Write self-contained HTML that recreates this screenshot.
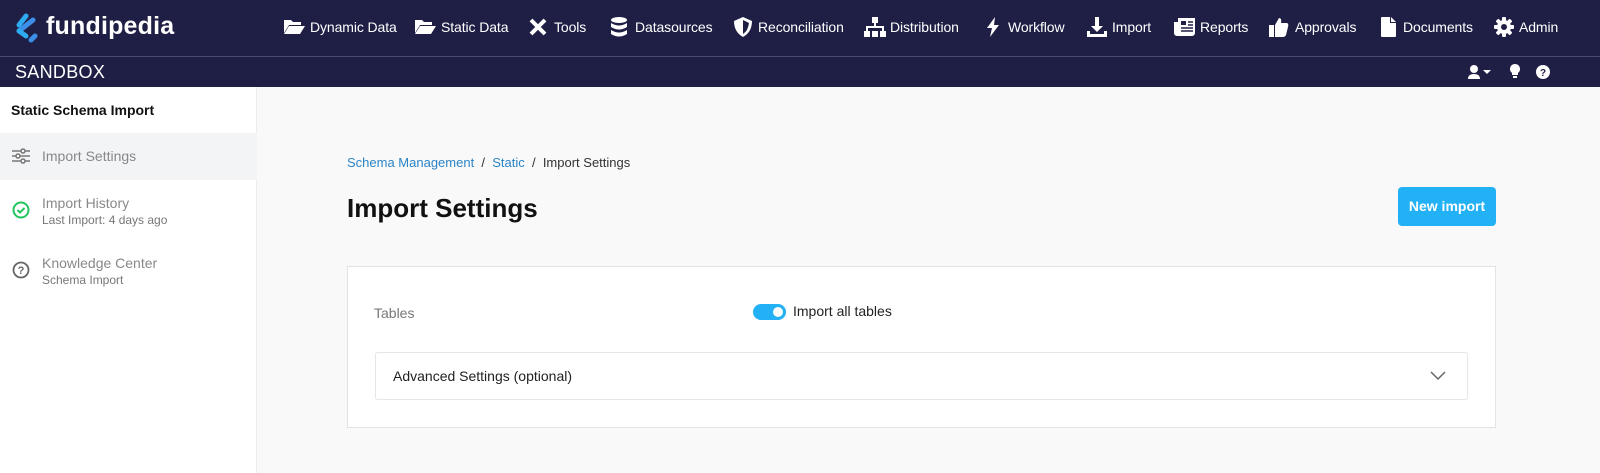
<!DOCTYPE html>
<html><head><style>
*{margin:0;padding:0;box-sizing:border-box}
body{width:1600px;height:473px;overflow:hidden;background:#f9f9f9;font-family:"Liberation Sans",sans-serif;position:relative}
.nav{position:absolute;left:0;top:0;width:1600px;height:56px;background:#1f1f45}
.sb{position:absolute;left:0;top:56px;width:1600px;height:31px;background:#1f1f45;border-top:1px solid #4a4b72}
.ni{position:absolute;top:19px;color:#fff;font-size:14px;white-space:nowrap;letter-spacing:-0.1px}
.ic{position:absolute;top:17px}
.side{position:absolute;left:0;top:87px;width:257px;height:386px;background:#fff;border-right:1px solid #ececec}
.t{position:absolute;white-space:nowrap}
</style></head><body>
<div class="nav">
<svg style="position:absolute;left:14px;top:11px" width="26" height="34" viewBox="0 0 26 34"><g stroke="#2eaaf0" stroke-width="5" stroke-linecap="round"><path d="M5 14L12 5"/><path d="M5 20L19 9" stroke="#3d8ee8"/><path d="M5 20L12 25"/><path d="M17 29L21 25" stroke="#3d8ee8"/></g></svg>
<div class="t" style="left:46px;top:12px;color:#fff;font-size:25px;font-weight:bold;letter-spacing:0.2px">fundipedia</div>

<svg class="ic" style="left:283px" width="22" height="18" viewBox="0 0 22 18"><path d="M1 3h7l2 2h8v3H6L1 16z" fill="#fff"/><path d="M6 9h16l-5 8H1z" fill="#fff"/></svg>
<div class="ni" style="left:310px">Dynamic Data</div>
<svg class="ic" style="left:414px" width="22" height="18" viewBox="0 0 22 18"><path d="M1 3h7l2 2h8v3H6L1 16z" fill="#fff"/><path d="M6 9h16l-5 8H1z" fill="#fff"/></svg>
<div class="ni" style="left:441px">Static Data</div>
<svg class="ic" style="left:528px" width="20" height="20" viewBox="0 0 20 20"><path d="M3 3l14 14M17 3L3 17" stroke="#fff" stroke-width="4"/></svg>
<div class="ni" style="left:554px">Tools</div>
<svg class="ic" style="left:611px" width="16" height="20" viewBox="0 0 16 20"><ellipse cx="8" cy="3" rx="8" ry="3" fill="#fff"/><path d="M0 6q8 5 16 0v4q-8 5-16 0zM0 13q8 5 16 0v4q-8 5-16 0z" fill="#fff"/></svg>
<div class="ni" style="left:635px">Datasources</div>
<svg class="ic" style="left:734px" width="18" height="20" viewBox="0 0 18 20"><path d="M9 0L0 4q0 11 9 16q9-5 9-16z" fill="#fff"/><path d="M9 3v14q5-3 6-11z" fill="#1f1f45"/></svg>
<div class="ni" style="left:758px">Reconciliation</div>
<svg class="ic" style="left:864px" width="22" height="20" viewBox="0 0 22 20"><rect x="8" y="0" width="6" height="6" fill="#fff"/><path d="M11 6v4M3 14v-4h16v4" stroke="#fff" stroke-width="2" fill="none"/><rect x="0" y="14" width="6" height="6" fill="#fff"/><rect x="8" y="14" width="6" height="6" fill="#fff"/><rect x="16" y="14" width="6" height="6" fill="#fff"/></svg>
<div class="ni" style="left:890px">Distribution</div>
<svg class="ic" style="left:986px" width="14" height="20" viewBox="0 0 14 20"><path d="M9 0L1 11h5l-2 9 9-12H8z" fill="#fff"/></svg>
<div class="ni" style="left:1008px">Workflow</div>
<svg class="ic" style="left:1087px" width="20" height="20" viewBox="0 0 20 20"><path d="M8 0h4v9h4l-6 6-6-6h4z" fill="#fff"/><path d="M0 14h3v3h14v-3h3v6H0z" fill="#fff"/></svg>
<div class="ni" style="left:1112px">Import</div>
<svg class="ic" style="left:1174px" width="22" height="20" viewBox="0 0 22 20"><path d="M4 1h17v15a3 3 0 0 1-3 3H3a3 3 0 0 1-3-3V5h4z" fill="#fff"/><rect x="7" y="4" width="5" height="4" fill="#1f1f45"/><path d="M14 5h5M14 8h5M7 11h12M7 14h12" stroke="#1f1f45" stroke-width="1.5"/></svg>
<div class="ni" style="left:1200px">Reports</div>
<svg class="ic" style="left:1269px" width="20" height="20" viewBox="0 0 20 20"><rect x="0" y="8" width="5" height="12" fill="#fff"/><path d="M6 8l4-7q3 0 2 5h6q2 1 1 4l-2 8q-1 2-3 2H6z" fill="#fff"/></svg>
<div class="ni" style="left:1295px">Approvals</div>
<svg class="ic" style="left:1381px" width="15" height="20" viewBox="0 0 15 20"><path d="M0 1q0-1 1-1h8v6h6v13q0 1-1 1H1q-1 0-1-1zM10 0l5 5h-5z" fill="#fff"/></svg>
<div class="ni" style="left:1403px">Documents</div>
<svg class="ic" style="left:1494px" width="20" height="20" viewBox="0 0 20 20"><g fill="#fff"><circle cx="10" cy="10" r="7"/><rect x="8" y="0" width="4" height="20" rx="1"/><rect x="8" y="0" width="4" height="20" rx="1" transform="rotate(45 10 10)"/><rect x="8" y="0" width="4" height="20" rx="1" transform="rotate(90 10 10)"/><rect x="8" y="0" width="4" height="20" rx="1" transform="rotate(135 10 10)"/></g><circle cx="10" cy="10" r="3" fill="#1f1f45"/></svg>
<div class="ni" style="left:1519px">Admin</div>
</div>
<div class="sb">
<div class="t" style="left:15px;top:5px;color:#fff;font-size:18px;letter-spacing:0.3px">SANDBOX</div>
<svg style="position:absolute;left:1468px;top:8px" width="26" height="14" viewBox="0 0 26 14"><circle cx="6" cy="4" r="4" fill="#fff"/><path d="M0 14q0-5 6-5t6 5z" fill="#fff"/><path d="M15 5h8l-4 4z" fill="#fff"/></svg>
<svg style="position:absolute;left:1510px;top:7px" width="10" height="15" viewBox="0 0 10 15"><path d="M5 0a5 5 0 0 1 3 9v2H2V9A5 5 0 0 1 5 0z" fill="#fff"/><rect x="3" y="12" width="4" height="2" fill="#fff"/></svg>
<svg style="position:absolute;left:1536px;top:8px" width="14" height="14" viewBox="0 0 14 14"><circle cx="7" cy="7" r="7" fill="#fff"/><text x="7" y="11" font-size="10" font-weight="bold" text-anchor="middle" fill="#1f1f45" font-family="Liberation Sans">?</text></svg>
</div>
<div class="side">
<div class="t" style="left:11px;top:15px;font-size:14px;font-weight:bold;color:#111">Static Schema Import</div>
<div style="position:absolute;left:0;top:46px;width:257px;height:47px;background:#f3f4f6"></div>
<svg style="position:absolute;left:12px;top:61px" width="18" height="16" viewBox="0 0 18 16" fill="none" stroke="#777" stroke-width="1.5"><path d="M0 3h18M0 8h18M0 13h18"/><circle cx="11" cy="3" r="2" fill="#f3f4f6"/><circle cx="6" cy="8" r="2" fill="#f3f4f6"/><circle cx="11" cy="13" r="2" fill="#f3f4f6"/></svg>
<div class="t" style="left:42px;top:61px;font-size:14px;color:#888">Import Settings</div>
<svg style="position:absolute;left:12px;top:114px" width="18" height="18" viewBox="0 0 18 18" fill="none" stroke="#22c55e" stroke-width="2"><circle cx="9" cy="9" r="7.5"/><path d="M5.5 9l2.5 2.5 4.5-4.5"/></svg>
<div class="t" style="left:42px;top:108px;font-size:14px;color:#888">Import History</div>
<div class="t" style="left:42px;top:126px;font-size:12px;color:#777">Last Import: 4 days ago</div>
<svg style="position:absolute;left:12px;top:174px" width="18" height="18" viewBox="0 0 18 18"><circle cx="9" cy="9" r="7.5" fill="none" stroke="#666" stroke-width="1.8"/><text x="9" y="13" font-size="11" font-weight="bold" text-anchor="middle" fill="#666" font-family="Liberation Sans">?</text></svg>
<div class="t" style="left:42px;top:168px;font-size:14px;color:#888">Knowledge Center</div>
<div class="t" style="left:42px;top:186px;font-size:12px;color:#777">Schema Import</div>
</div>
<div class="t" style="left:347px;top:155px;font-size:13px;color:#333"><span style="color:#2b84c6">Schema Management</span> &nbsp;/&nbsp; <span style="color:#2b84c6">Static</span> &nbsp;/&nbsp; Import Settings</div>
<div class="t" style="left:347px;top:193px;font-size:26px;font-weight:bold;color:#111">Import Settings</div>
<div style="position:absolute;left:1398px;top:187px;width:98px;height:39px;background:#23b1f6;border-radius:4px;color:#fff;font-size:14px;font-weight:bold;text-align:center;line-height:39px">New import</div>
<div style="position:absolute;left:347px;top:266px;width:1149px;height:162px;background:#fff;border:1px solid #e3e3e3"></div>
<div class="t" style="left:374px;top:305px;font-size:14px;color:#777">Tables</div>
<div style="position:absolute;left:753px;top:304px;width:33px;height:16px;border-radius:8px;background:#23b1f6"><div style="position:absolute;right:3px;top:3px;width:10px;height:10px;border-radius:5px;background:#fff"></div></div>
<div class="t" style="left:793px;top:303px;font-size:14px;color:#222">Import all tables</div>
<div style="position:absolute;left:375px;top:352px;width:1093px;height:48px;background:#fff;border:1px solid #e6e6e6;border-radius:3px"></div>
<div class="t" style="left:393px;top:368px;font-size:14px;color:#222">Advanced Settings (optional)</div>
<svg style="position:absolute;left:1430px;top:371px" width="16" height="10" viewBox="0 0 16 10"><path d="M1 1l7 7 7-7" fill="none" stroke="#666" stroke-width="1.5"/></svg>
</body></html>
